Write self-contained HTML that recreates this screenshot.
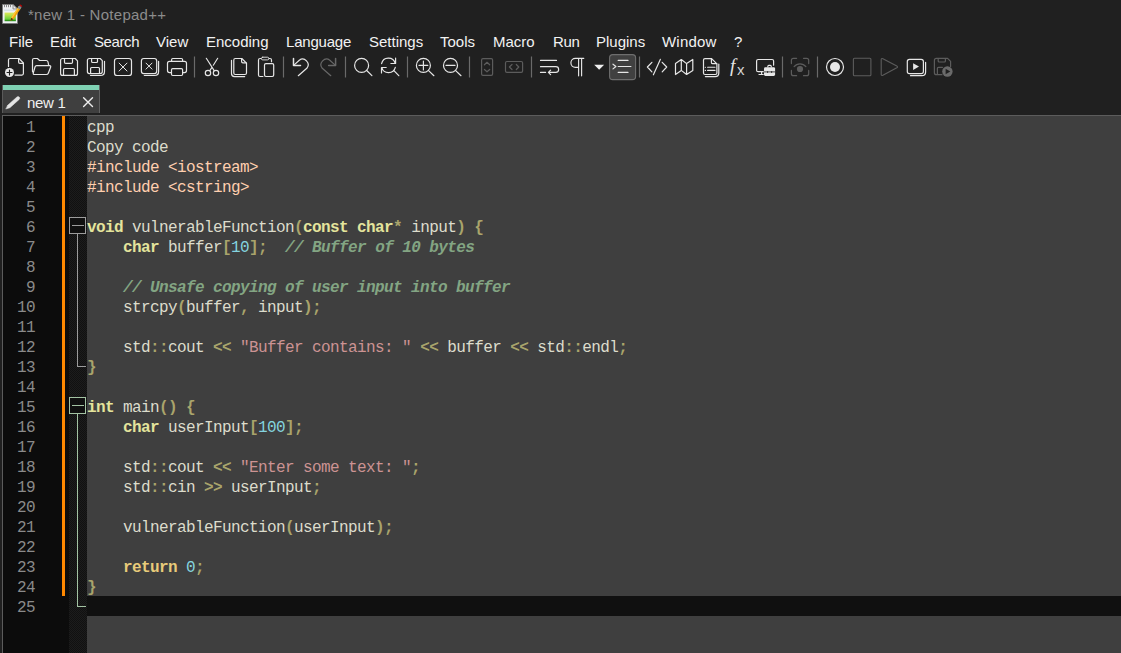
<!DOCTYPE html>
<html lang="en">
<head>
<meta charset="utf-8">
<title>*new 1 - Notepad++</title>
<style>
html,body{margin:0;padding:0;}
body{width:1121px;height:653px;overflow:hidden;background:#202020;position:relative;font-family:"Liberation Sans",sans-serif;}
.abs{position:absolute;}
#title{left:28px;top:5px;font-size:15px;line-height:20px;color:#8c8c8c;white-space:nowrap;letter-spacing:0.27px;}
.menu{top:32px;font-size:15px;line-height:20px;color:#f2f2f2;white-space:nowrap;}
#toolbar{left:0;top:54px;width:1121px;height:28px;}
#toolbar svg{position:absolute;overflow:visible;}
.sep{position:absolute;top:57px;width:1px;height:21px;background:#5c5c5c;}
#tab{left:2px;top:85px;width:98px;height:28px;background:#3f3f3f;box-sizing:border-box;border-left:1px solid #5a5a5a;border-right:1px solid #626262;}
#tabbar{left:3px;top:85px;width:96px;height:5px;background:#7fd1b3;}
#tabtxt{left:27px;top:93px;font-size:15px;line-height:20px;color:#f0f0f0;white-space:nowrap;letter-spacing:-0.3px;}
#edborder{left:2px;top:115px;width:1119px;height:538px;background:#5c5c5c;}
#editor{left:3px;top:116px;width:1118px;height:537px;background:#3f3f3f;overflow:hidden;}
#lnm{left:0;top:0;width:66px;height:537px;background:#0c0c0c;}
#chg{left:59px;top:0;width:3px;height:480px;background:#ff8800;}
#gap{left:62px;top:0;width:4px;height:537px;background:#0c0c0c;}
#fold{left:66px;top:0;width:18px;height:537px;background-color:#1c1c1c;
 background-image:linear-gradient(45deg,#111 25%,transparent 25%,transparent 75%,#111 75%),linear-gradient(45deg,#111 25%,transparent 25%,transparent 75%,#111 75%);
 background-size:2px 2px;background-position:0 0,1px 1px;}
#curline{left:84px;top:480px;width:1034px;height:20px;background:#101010;}
.ln{position:absolute;left:0;width:32px;text-align:right;font:16px/20px "Liberation Mono",monospace;letter-spacing:-0.6px;color:#8a8a8a;margin-top:2px;}
#code{left:84px;top:2px;margin:0;font:16px/20px "Liberation Mono",monospace;letter-spacing:-0.6px;color:#dcdccc;white-space:pre;}
#code b{font-weight:bold;}
.t{color:#e4e49c;font-weight:bold;}
.k{color:#e8cb7a;font-weight:bold;}
.o{color:#a9a46b;font-weight:bold;}
.n{color:#84d3df;}
.s{color:#cc9393;}
.c{color:#83a583;font-style:italic;font-weight:bold;}
.p{color:#ffcfaf;}
</style>
</head>
<body>
<svg id="appicon" class="abs" style="left:0;top:0" width="28" height="28" viewBox="0 0 28 28">
<defs><linearGradient id="gg" x1="0" y1="0" x2="0" y2="1"><stop offset="0" stop-color="#dde858"/><stop offset="0.3" stop-color="#b4e050"/><stop offset="0.75" stop-color="#6ccf3a"/><stop offset="1" stop-color="#127a0a"/></linearGradient>
<linearGradient id="pg" x1="0" y1="0" x2="1" y2="0"><stop offset="0" stop-color="#ffd24a"/><stop offset="1" stop-color="#e08a00"/></linearGradient></defs>
<path d="M2.5 4.5H13L17.5 9V23.5H2.5Z" fill="#eef0f2" stroke="#7a7a7a" stroke-width="1"/>
<path d="M13 4.5V9H17.5Z" fill="#e8e8e8" stroke="#777" stroke-width="0.8"/>
<path d="M4.5 5V7.2M6.5 5V7.2M8.5 5V7.2M10.5 5V7.2" stroke="#8a8a8a" stroke-width="1"/>
<path d="M4 10.2H15.5" stroke="#c4d4e4" stroke-width="0.8"/>
<rect x="4.6" y="12.6" width="11.3" height="8.6" fill="url(#gg)"/>
<g transform="translate(-0.9,0.1)">
<path d="M11.4 20.6L12 17.6L19.6 6.2L22 7.8L14.4 19.2Z" fill="#f0a208"/>
<path d="M12 17.6L19.6 6.2L20.6 6.9L13 18.3Z" fill="#ffc93c"/>
<path d="M11.4 20.6L12 17.6L14.4 19.2Z" fill="#5a3a10"/>
<path d="M18.5 7.9L20.2 5.3L22.6 6.9L20.9 9.5Z" fill="#7d8a98"/>
<path d="M20.2 5.3L20.9 4.2L23.3 5.8L22.6 6.9Z" fill="#c00808"/>
</g>
</svg>
<div id="title" class="abs">*new 1 - Notepad++</div>

<div class="abs menu" style="left:9px">File</div>
<div class="abs menu" style="left:50px">Edit</div>
<div class="abs menu" style="left:94px;letter-spacing:-0.4px">Search</div>
<div class="abs menu" style="left:156px">View</div>
<div class="abs menu" style="left:206px">Encoding</div>
<div class="abs menu" style="left:286px;letter-spacing:-0.2px">Language</div>
<div class="abs menu" style="left:369px">Settings</div>
<div class="abs menu" style="left:440px">Tools</div>
<div class="abs menu" style="left:493px">Macro</div>
<div class="abs menu" style="left:553px;letter-spacing:-0.3px">Run</div>
<div class="abs menu" style="left:596px">Plugins</div>
<div class="abs menu" style="left:662px;letter-spacing:0.2px">Window</div>
<div class="abs menu" style="left:734px">?</div>


<div id="tab" class="abs"></div>
<div id="tabbar" class="abs"></div>
<div id="tabtxt" class="abs">new 1</div>

<svg id="tb" class="abs" style="left:0;top:0" width="1121" height="115" viewBox="0 0 1121 115" fill="none" stroke="#e6e6e6" stroke-width="1.2" stroke-linecap="round" stroke-linejoin="round">
<!-- separators -->
<g stroke="#6a6a6a" stroke-width="1.2" stroke-linecap="butt">
<path d="M194.5 56.5V77.5M283.5 56.5V77.5M345.5 56.5V77.5M407.5 56.5V77.5M469.5 56.5V77.5M531.5 56.5V77.5M639.5 56.5V77.5M782.5 56.5V77.5M817.5 56.5V77.5"/>
</g>
<!-- new -->
<path d="M8.5 66.5V60Q8.5 58.5 10 58.5H19L23.4 63V73.6Q23.4 75.1 21.9 75.1H15"/>
<path d="M18.6 58.7V62Q18.6 63.3 19.9 63.3H23.2"/>
<circle cx="9.5" cy="72.5" r="4.5" fill="#e8e8e8" stroke="none"/>
<path d="M7 72.5H12M9.5 70V75" stroke="#202020" stroke-width="1.1"/>
<!-- open -->
<path d="M33.3 72.3L32.5 71.5V60Q32.5 58.5 34 58.5H37.4L39.6 60.5H46.2Q47.6 60.5 48 61.9L48.7 65.4"/>
<path d="M36.6 65.7H49.6Q51.2 65.7 50.6 67.2L48.3 73.2Q47.8 74.5 46.3 74.5H34.6Q32.8 74.5 33.3 72.8L35 67Q35.4 65.7 36.6 65.7Z"/>
<!-- save -->
<path d="M62.6 58.5H75.2L77.5 60.8V73.4Q77.5 75.4 75.5 75.4H62.6Q60.6 75.4 60.6 73.4V60.5Q60.6 58.5 62.6 58.5Z"/>
<path d="M64.5 58.7V62.2Q64.5 63.4 65.7 63.4H71.3Q72.5 63.4 72.5 62.2V58.7"/>
<path d="M63.5 75.2V69.7Q63.5 68.5 64.7 68.5H73.2Q74.4 68.5 74.4 69.7V75.2"/>
<!-- save all -->
<path d="M89.4 58.5H100.2L102.3 60.6V71.6Q102.3 73.6 100.3 73.6H89.4Q87.4 73.6 87.4 71.6V60.5Q87.4 58.5 89.4 58.5Z"/>
<path d="M91.6 58.7V61.5Q91.6 62.5 92.6 62.5H96.5Q97.5 62.5 97.5 61.5V58.7"/>
<path d="M90.6 73.4V68.5Q90.6 67.5 91.6 67.5H98.5Q99.5 67.5 99.5 68.5V73.4"/>
<path d="M104.5 61.3V71.5Q104.5 75.5 100.5 75.5H90.5"/>
<!-- close -->
<rect x="114.5" y="58.5" width="17" height="17" rx="2.6"/>
<path d="M119.1 63.1L127 71M127 63.1L119.1 71" stroke-width="1"/>
<!-- close all -->
<rect x="141.4" y="58.5" width="15.3" height="15.1" rx="2.4"/>
<path d="M146 63.1L152 69.1M152 63.1L146 69.1" stroke-width="1"/>
<path d="M158.6 61.3V71.5Q158.6 75.5 154.6 75.5H144.3"/>
<!-- print -->
<path d="M171.3 72.6H169.5Q167.5 72.6 167.5 70.6V63.4Q167.5 61.4 169.5 61.4H184.5Q186.5 61.4 186.5 63.4V70.6Q186.5 72.6 184.5 72.6H182.8"/>
<path d="M171.6 61.2V59.7Q171.6 58.5 172.8 58.5H181.4Q182.6 58.5 182.6 59.7V61.2"/>
<rect x="171.5" y="68.6" width="11.1" height="6.9" rx="1.2"/>
<!-- cut -->
<path d="M206.3 58.3L214.2 70.6M217.7 58.3L213.3 65.2M211.8 67.6L209.8 70.6" stroke-width="1.15"/>
<circle cx="208" cy="73" r="2.7"/><circle cx="216" cy="73" r="2.7"/>
<!-- copy -->
<path d="M235.3 58.5H241.8L246.5 63.2V73Q246.5 74.5 245 74.5H235.3Q233.8 74.5 233.8 73V60Q233.8 58.5 235.3 58.5Z"/>
<path d="M241.6 58.7V61.6Q241.6 62.9 242.9 62.9H246.3"/>
<path d="M231.5 60.3V73.6Q231.5 76.6 234.5 76.6H244.7"/>
<!-- paste -->
<path d="M262.9 76.5H260Q258.5 76.5 258.5 75V60Q258.5 58.5 260 58.5H270Q271.5 58.5 271.5 60V61.7"/>
<rect x="261.4" y="57.2" width="7.4" height="2.7" rx="1.35" fill="#202020" stroke-width="0.9"/>
<rect x="264.5" y="63.6" width="9.2" height="12.9" rx="1.4"/>
<!-- undo -->
<path d="M293.5 58.5V65.5H300.5" stroke-width="1.5"/>
<path d="M293.9 65.1L299.3 60.2A5.6 5.6 0 0 1 307.1 68L298.3 75.7" stroke-width="1.2"/>
<!-- redo (disabled) -->
<g stroke="#686868">
<path d="M335.6 58.5V65.5H328.6" stroke-width="1.5"/>
<path d="M335.2 65.1L329.8 60.2A5.6 5.6 0 0 0 322 68L330.8 75.7" stroke-width="1.2"/>
</g>
<!-- find -->
<circle cx="361.6" cy="65.4" r="7"/>
<path d="M366.7 70.5L371.9 75.7"/>
<!-- replace -->
<path d="M381.6 63.7A7 7 0 0 1 395.2 63.3M395.6 58V63.5H390.9"/>
<path d="M395.3 67.4A7 7 0 0 1 381.8 67.7M381.5 73V67.5H386.2"/>
<path d="M393.9 70.7L398.8 75.7"/>
<!-- zoom in -->
<circle cx="423.4" cy="65.4" r="7"/>
<path d="M419 65.4H427.8M423.4 61V69.9" stroke-width="1.15"/>
<path d="M428.6 70.6L433.9 75.7"/>
<!-- zoom out -->
<circle cx="450.5" cy="65.4" r="7"/>
<path d="M446 65.4H455" stroke-width="1.15"/>
<path d="M455.7 70.6L461 75.7"/>
<!-- sync v/h (disabled) -->
<g stroke="#5c5c5c" stroke-width="1.2">
<rect x="481.6" y="58.6" width="11" height="16.8" rx="1.4"/>
<path d="M484.4 64.8L487 62.3L489.7 64.8M484.4 69.5L487 71.8L489.7 69.5"/>
<rect x="505.5" y="61.5" width="17.1" height="10.9" rx="1.4"/>
<path d="M512 64.5L509.4 67L512 69.5M516.3 64.5L518.8 67L516.3 69.5"/>
</g>
<!-- wrap -->
<path d="M540.5 60.4H556.5M540.5 66.7H555.8A2.85 2.85 0 0 1 555.8 72.4H548.8M550.6 70.1L548.4 72.4L550.6 74.6M540.5 72.4H545.6" stroke-width="1.2"/>
<!-- pilcrow -->
<path d="M583.8 58.3H575.4A4.5 4.5 0 0 0 575.4 67.3H578.5M578.6 58.4V75.8M581.6 58.4V75.8" stroke-width="1.15"/>
<!-- dropdown -->
<path d="M594.2 64.8H604.1L599.15 69.8Z" fill="#eeeeee" stroke="none"/>
<!-- indent guide (checked) -->
<rect x="609.6" y="54.6" width="26" height="25" rx="3.2" fill="#404040" stroke="#6e6e6e" stroke-width="1.1"/>
<path d="M618.2 60.4H628M618.2 66.5H630.9M618.2 72.4H628M613 64.2L615.9 66.5L613 68.9" stroke-width="1.2"/>
<!-- code -->
<path d="M651.9 62.3L647.4 67L651.9 71.9M660.3 59.4L653.4 74.8M662.2 62.3L666.7 67L662.2 71.9" stroke-width="1.2"/>
<!-- map -->
<path d="M675.5 63.6L681.3 59.5L686.6 63.6L692.8 59.5V70.4L686.6 74.5L681.3 70.4L675.5 74.5ZM681.3 59.5V70.4M686.6 63.6V74.5" stroke-width="1.2"/>
<!-- doc list -->
<path d="M705 58.6H711.6L716.9 63.9V73Q716.9 74.5 715.4 74.5H705Q703.5 74.5 703.5 73V60.1Q703.5 58.6 705 58.6Z"/>
<path d="M711.4 58.8V62.4Q711.4 63.7 712.7 63.7H716.7"/>
<path d="M707.6 67.3H715M707.6 70.4H715M705.3 67.3H705.5M705.3 70.4H705.5" stroke-width="1.1"/>
<path d="M718.8 64V73Q718.8 76.6 715.2 76.6H705.4"/>
<!-- fx -->
<text x="730" y="72" font-family="'Liberation Serif',serif" font-style="italic" font-size="19" fill="#e6e6e6" stroke="none">f</text>
<text x="737" y="74.9" font-family="'Liberation Sans',sans-serif" font-size="15" fill="#d4d4d4" stroke="none">x</text>
<!-- monitor + briefcase -->
<path d="M773.6 65.2V61Q773.6 59.5 772.1 59.5H758.1Q756.6 59.5 756.6 61V70.2Q756.6 71.7 758.1 71.7H763.2M761.6 71.9V74.5M759 74.5H763.2"/>
<path d="M767.8 67V66.4Q767.8 65.4 768.8 65.4H770.3Q771.3 65.4 771.3 66.4V67" stroke-width="1.1"/>
<rect x="764" y="67.2" width="11.1" height="8.8" rx="1.4" fill="#e8e8e8" stroke="none"/>
<path d="M764 71.9H775.1M767.6 71V73M771.6 71V73" stroke="#303030" stroke-width="0.9" stroke-linecap="butt"/>
<!-- monitoring (disabled) -->
<g stroke="#5c5c5c" stroke-width="1.2">
<path d="M791.4 63.6V60.3Q791.4 58.3 793.4 58.3H796.6M803.5 58.3H806.7Q808.7 58.3 808.7 60.3V63.6M808.7 70.4V73.7Q808.7 75.7 806.7 75.7H803.5M796.6 75.7H793.4Q791.4 75.7 791.4 73.7V70.4"/>
<path d="M794.1 66.6A7.6 7.6 0 0 1 805.9 66.6"/>
<circle cx="800" cy="69" r="3.1" fill="#5c5c5c" stroke="none"/>
</g>
<!-- record -->
<circle cx="835" cy="67" r="8.5" stroke-width="1.2"/>
<circle cx="835" cy="67" r="5" fill="#e6e6e6" stroke="none"/>
<!-- stop (disabled) -->
<rect x="853.4" y="58.3" width="17.5" height="17.4" rx="1" stroke="#5c5c5c" stroke-width="1.1"/>
<!-- play (disabled) -->
<path d="M881.2 59.8Q881.2 57.9 882.9 58.8L896.8 66Q898.3 66.9 896.8 67.8L882.9 75.2Q881.2 76.1 881.2 74.2Z" stroke="#5c5c5c" stroke-width="1.1"/>
<!-- play multi -->
<rect x="907.3" y="59.4" width="16.1" height="14.3" rx="2.2"/>
<path d="M913.1 63.2V70L919 66.6Z" fill="#e8e8e8" stroke="none"/>
<path d="M925.6 62.4V72Q925.6 75.7 921.9 75.7H910.5"/>
<!-- save macro (disabled) -->
<g stroke="#5c5c5c" stroke-width="1.2">
<path d="M942 74.7H936.4Q934.4 74.7 934.4 72.7V60.4Q934.4 58.4 936.4 58.4H947.6L950.6 61.4V66.5"/>
<path d="M938.2 58.6V61Q938.2 62 939.2 62H944.4Q945.4 62 945.4 61V58.6"/>
<path d="M937.4 74.5V68.3Q937.4 67.3 938.4 67.3H942.5"/>
<circle cx="947.4" cy="71.5" r="5.2" fill="#6a6a6a" stroke="none"/>
<path d="M945.6 68.8V74.2L950.3 71.5Z" fill="#202020" stroke="none"/>
</g>
<!-- tab pencil and close -->
<path d="M6.1 108.9L9.89 107.73L19.14 99.46A1.65 1.65 0 0 0 16.94 97L7.69 105.27Z" fill="#e4e4e4" stroke="#e4e4e4" stroke-width="0.5"/>
<path d="M83.6 97.7L92.5 106.6M92.5 97.7L83.6 106.6" stroke="#ececec" stroke-width="1.4"/>
</svg>
<div id="edborder" class="abs"></div>
<div id="editor" class="abs">
<div id="lnm" class="abs"></div>
<div id="chg" class="abs"></div>
<div id="gap" class="abs"></div>
<div id="fold" class="abs"></div>
<div id="curline" class="abs"></div>
<svg id="foldsvg" class="abs" style="left:0;top:0" width="90" height="537" viewBox="0 0 90 537" fill="none" stroke-width="1" shape-rendering="crispEdges">
<g stroke="#9c9c9c">
<path d="M74.5 117.5V250.5H83"/>
<rect x="66.5" y="101.5" width="16" height="16" fill="#101010"/>
<path d="M68.5 109.5H80.5"/>
</g>
<g stroke="#a3c3a3">
<path d="M74.5 297.5V490.5H83"/>
<rect x="66.5" y="281.5" width="16" height="16" fill="#101010"/>
<path d="M68.5 289.5H80.5"/>
</g>
</svg>
<div id="lines"><div class="ln" style="top:0px">1</div><div class="ln" style="top:20px">2</div><div class="ln" style="top:40px">3</div><div class="ln" style="top:60px">4</div><div class="ln" style="top:80px">5</div><div class="ln" style="top:100px">6</div><div class="ln" style="top:120px">7</div><div class="ln" style="top:140px">8</div><div class="ln" style="top:160px">9</div><div class="ln" style="top:180px">10</div><div class="ln" style="top:200px">11</div><div class="ln" style="top:220px">12</div><div class="ln" style="top:240px">13</div><div class="ln" style="top:260px">14</div><div class="ln" style="top:280px">15</div><div class="ln" style="top:300px">16</div><div class="ln" style="top:320px">17</div><div class="ln" style="top:340px">18</div><div class="ln" style="top:360px">19</div><div class="ln" style="top:380px">20</div><div class="ln" style="top:400px">21</div><div class="ln" style="top:420px">22</div><div class="ln" style="top:440px">23</div><div class="ln" style="top:460px">24</div><div class="ln" style="top:480px">25</div></div>
<pre id="code" class="abs">cpp
Copy code
<span class="p">#include &lt;iostream&gt;</span>
<span class="p">#include &lt;cstring&gt;</span>

<span class="t">void</span> vulnerableFunction<span class="o">(</span><span class="t">const</span> <span class="t">char</span><span class="o">*</span> input<span class="o">)</span> <span class="o">{</span>
    <span class="t">char</span> buffer<span class="o">[</span><span class="n">10</span><span class="o">];</span>  <span class="c">// Buffer of 10 bytes</span>

    <span class="c">// Unsafe copying of user input into buffer</span>
    strcpy<span class="o">(</span>buffer<span class="o">,</span> input<span class="o">);</span>

    std<span class="o">::</span>cout <span class="o">&lt;&lt;</span> <span class="s">"Buffer contains: "</span> <span class="o">&lt;&lt;</span> buffer <span class="o">&lt;&lt;</span> std<span class="o">::</span>endl<span class="o">;</span>
<span class="o">}</span>

<span class="t">int</span> main<span class="o">()</span> <span class="o">{</span>
    <span class="t">char</span> userInput<span class="o">[</span><span class="n">100</span><span class="o">];</span>

    std<span class="o">::</span>cout <span class="o">&lt;&lt;</span> <span class="s">"Enter some text: "</span><span class="o">;</span>
    std<span class="o">::</span>cin <span class="o">&gt;&gt;</span> userInput<span class="o">;</span>

    vulnerableFunction<span class="o">(</span>userInput<span class="o">);</span>

    <span class="k">return</span> <span class="n">0</span><span class="o">;</span>
<span class="o">}</span>
</pre>
</div>
</body>
</html>
